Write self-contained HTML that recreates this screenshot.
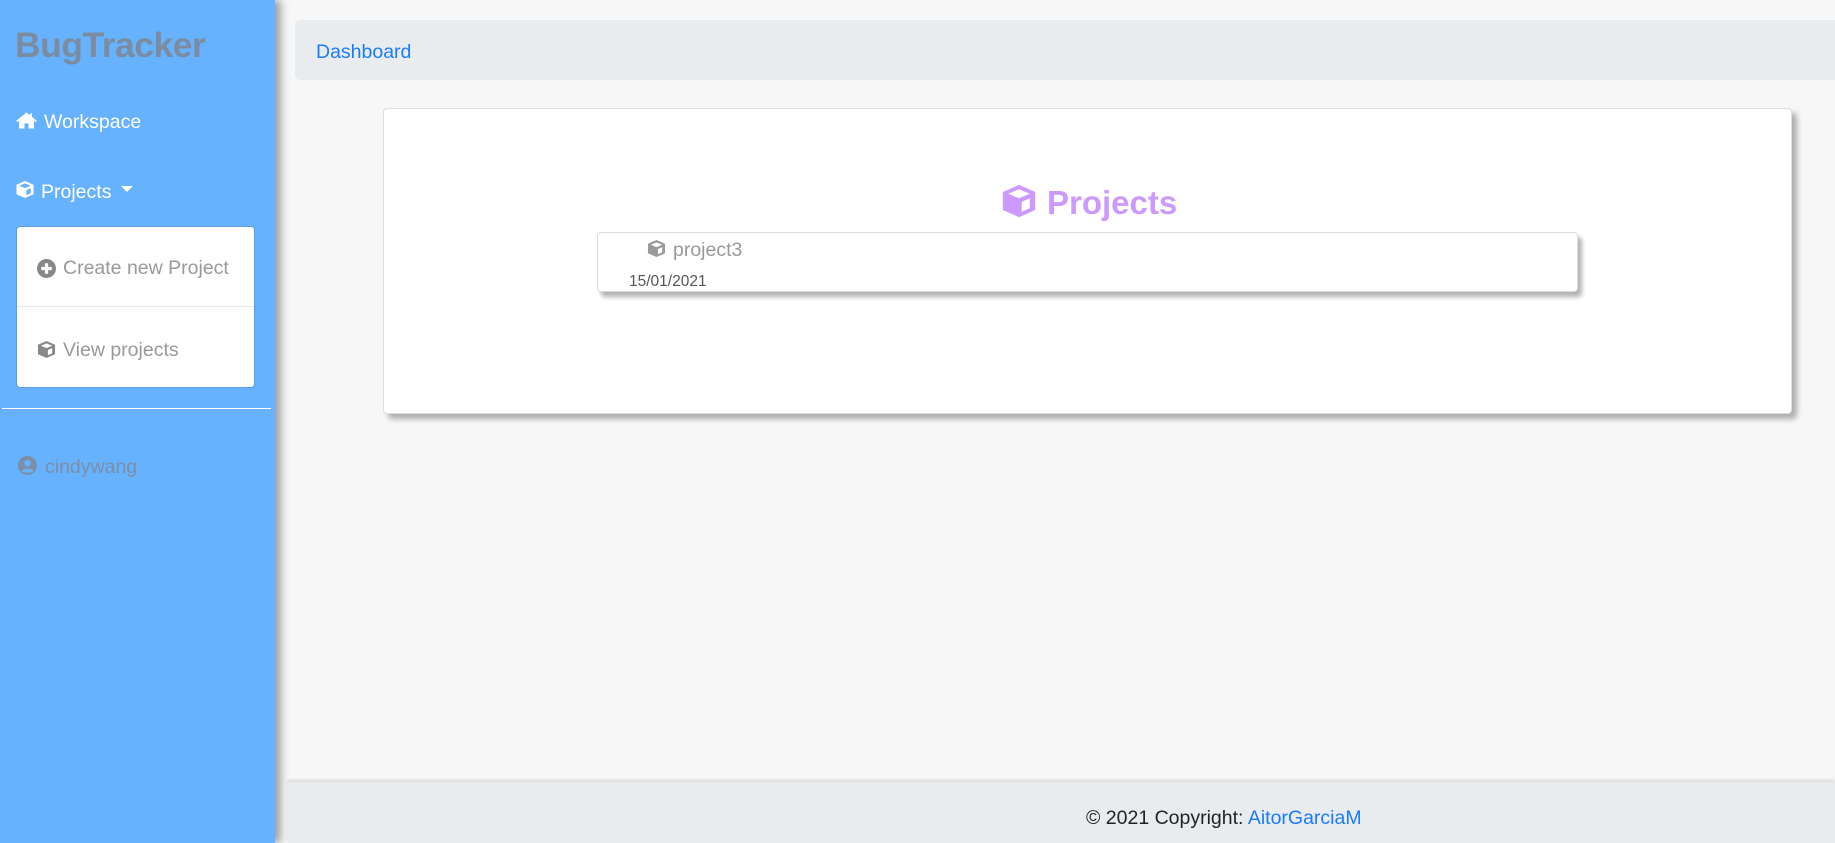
<!DOCTYPE html>
<html><head><meta charset="utf-8"><style>
*{margin:0;padding:0;box-sizing:border-box}
body{width:1835px;height:843px;background:#f7f7f7;font-family:"Liberation Sans",sans-serif;position:relative;overflow:hidden}
.side{position:absolute;left:0;top:0;width:275px;height:843px;background:#66b2ff;box-shadow:6px 0 8px rgba(0,0,0,.35);z-index:2}
.abs{position:absolute;white-space:nowrap}
.brand{left:15px;top:25px;font-size:35.5px;font-weight:bold;color:#7b8ca0;letter-spacing:-0.5px}
.nav{font-size:19.5px;color:#fff}
.dd{left:16px;top:226px;width:239px;height:162px;background:#fff;border:1px solid #5a9de0;border-radius:4px}
.dd .div{position:absolute;left:0;right:0;top:79px;border-top:1px solid #e6e6e6}
.gray{color:#999;font-size:19.5px}
.hr{left:2px;top:408px;width:269px;border-top:1.5px solid #fff}
.bc{left:295px;top:20px;width:1560px;height:60px;background:#e9ecef;border-radius:5px}
.card{left:383px;top:108px;width:1409px;height:306px;background:#fff;border:1px solid #ddd;border-radius:4px;box-shadow:5px 5px 6px rgba(0,0,0,.3)}
.item{left:597px;top:232px;width:981px;height:60px;background:#fff;border:1px solid #dcdcdc;border-radius:4px;box-shadow:4px 5px 5px rgba(0,0,0,.3)}
.foot{left:288px;top:782px;width:1547px;height:61px;background:#e9ecef;box-shadow:0 -2px 3px rgba(0,0,0,.12)}
</style></head><body>
<div class="side">
<div class="abs brand">BugTracker</div>
<svg class="abs" style="left:15px;top:111px" width="23" height="19" viewBox="0 0 23 18"><path d="M11.5 1 L1 9.5 L2.5 10.5 L4 9.3 V17 H9.5 V12 H13.5 V17 H19 V9.3 L20.5 10.5 L22 9.5 L17 5.4 V2 H15 V3.8 Z" fill="#fff"/></svg>
<div class="abs nav" style="left:44px;top:111px">Workspace</div>
<svg class="abs" style="left:15px;top:180px" width="20" height="19" viewBox="0 0 20 20"><path d="M10 1 L19 5 V15 L10 19 L1 15 V5 Z" fill="#fff"/><path d="M4 6 L10 3.5 L16 6 L10 8.5 Z M11.5 10.5 L16 8.5 V14 L11.5 16 Z" fill="#66b2ff"/></svg>
<div class="abs nav" style="left:41px;top:181px">Projects</div>
<svg class="abs" style="left:121px;top:186px" width="12" height="7" viewBox="0 0 12 7"><path d="M0 0H12L6 6Z" fill="#fff"/></svg>
<div class="abs dd"><div class="div"></div>
<svg class="abs" style="left:20px;top:32px" width="19" height="19" viewBox="0 0 20 20"><circle cx="10" cy="10" r="10" fill="#888"/><path d="M8.3 4.5h3.4v3.8h3.8v3.4h-3.8v3.8H8.3v-3.8H4.5V8.3h3.8z" fill="#fff"/></svg>
<div class="abs gray" style="left:46px;top:30px">Create new Project</div>
<svg class="abs" style="left:20px;top:113px" width="19" height="19" viewBox="0 0 20 20"><path d="M10 1 L19 5 V15 L10 19 L1 15 V5 Z" fill="#888"/><path d="M4 6 L10 3.5 L16 6 L10 8.5 Z M11.5 10.5 L16 8.5 V14 L11.5 16 Z" fill="#fff"/></svg>
<div class="abs gray" style="left:46px;top:112px">View projects</div>
</div>
<div class="abs hr"></div>
<svg class="abs" style="left:18px;top:456px" width="19" height="19" viewBox="0 0 20 20"><circle cx="10" cy="10" r="10" fill="#7d8ea5"/><circle cx="10" cy="7.5" r="3.5" fill="#66b2ff"/><path d="M3.8 16 C5 12.5 15 12.5 16.2 16 C14.5 18 5.5 18 3.8 16Z" fill="#66b2ff"/></svg>
<div class="abs" style="left:45px;top:456px;font-size:19.5px;color:#7d8ea5">cindywang</div>
</div>
<div class="abs bc"><div class="abs" style="left:21px;top:21px;font-size:19.5px;color:#1a7bff">Dashboard</div></div>
<div class="abs card"></div>
<svg class="abs" style="left:1001px;top:183px" width="36" height="36" viewBox="0 0 20 20"><path d="M10 1 L19 5 V15 L10 19 L1 15 V5 Z" fill="#cc99ff"/><path d="M4 6 L10 3.5 L16 6 L10 8.5 Z M11.5 10.5 L16 8.5 V14 L11.5 16 Z" fill="#fff"/></svg>
<div class="abs" style="left:1047px;top:184px;font-size:33px;font-weight:bold;color:#cc99ff">Projects</div>
<div class="abs item"></div>
<svg class="abs" style="left:647px;top:239px" width="19" height="19" viewBox="0 0 20 20"><path d="M10 1 L19 5 V15 L10 19 L1 15 V5 Z" fill="#999"/><path d="M4 6 L10 3.5 L16 6 L10 8.5 Z M11.5 10.5 L16 8.5 V14 L11.5 16 Z" fill="#fff"/></svg>
<div class="abs" style="left:673px;top:239px;font-size:19.5px;color:#999">project3</div>
<div class="abs" style="left:629px;top:273px;font-size:15.5px;color:#555">15/01/2021</div>
<div class="abs foot"></div>
<div class="abs" style="left:1086px;top:807px;font-size:19.5px;color:#222">© 2021 Copyright: <span style="color:#1a7bff">AitorGarciaM</span></div>
</body></html>
